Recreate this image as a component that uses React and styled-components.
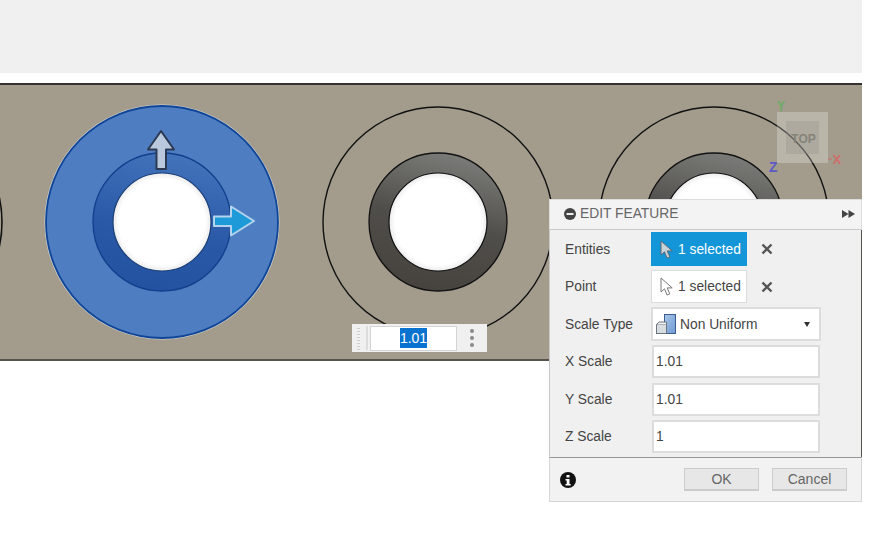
import React from "react";
import styled, { createGlobalStyle } from "styled-components";

const GlobalStyle = createGlobalStyle`
  html, body {
    margin: 0;
    background: #fff;
    font-family: "Liberation Sans", Arial, sans-serif;
    overflow: hidden;
  }
`;

const Page = styled.div`
  position: relative;
  width: 887px;
  height: 556px;
`;
const TopBand = styled.div`
  width: 862px;
  height: 73px;
  background: #f0f0f0;
  margin-bottom: 10px;
`;
const Viewport = styled.div`
  position: relative;
  box-sizing: border-box;
  width: 862px;
  height: 278px;
  background: #a39c8d;
  border-top: 2px solid #34322e;
  border-bottom: 2px solid #57544e;
  overflow: hidden;
`;
const Scene = styled.svg`
  display: block;
  width: 862px;
  height: 274px;
`;
const AxisLabel = styled.text`
  font-family: "Liberation Sans", Arial, sans-serif;
  font-size: ${p => p.$size || 13}px;
  font-weight: 700;
  fill: ${p => p.$color};
`;

const ValueBox = styled.div`
  position: absolute;
  left: 352px;
  top: 324px;
  width: 135px;
  height: 28px;
  display: flex;
  align-items: center;
  background: #f0f0f0;
`;
const Grip = styled.div`
  width: 12px;
  height: 24px;
  margin-left: 2px;
  margin-right: 2px;
  border-right: 2px solid #dcdcdc;
  background: repeating-linear-gradient(#f0f0f0 0 2px, #cfcfcf 2px 3px) 3px 0 / 3px 100% no-repeat;
`;
const ValueField = styled.div`
  box-sizing: border-box;
  width: 87px;
  height: 25px;
  background: #fff;
  border: 1px solid #d4d4d4;
  text-align: center;
  font-size: 14px;
  line-height: 23px;
  color: #fff;
`;
const Selected = styled.span`
  background: #0a72cf;
  padding: 2px 0;
`;
const Dots = styled.div`
  flex: 1;
  display: flex;
  flex-direction: column;
  align-items: center;
  gap: 3px;
`;
const Dot = styled.i`
  width: 4px;
  height: 4px;
  border-radius: 50%;
  background: #8a8a8a;
`;

const Panel = styled.section`
  position: absolute;
  left: 549px;
  top: 199px;
  width: 313px;
  font-size: 13.8px;
  color: #444;
`;
const PanelHeader = styled.header`
  box-sizing: border-box;
  height: 32px;
  display: flex;
  align-items: center;
  justify-content: space-between;
  padding: 0 6px 2px 14px;
  background: #f3f3f3;
  border: 1px solid #dcdcdc;
  border-bottom: 2px solid #c8c8c8;
  color: #666;
`;
const Title = styled.div`
  display: flex;
  align-items: center;
  gap: 4px;
  font-size: 13.8px;
`;
const PanelBody = styled.div`
  box-sizing: border-box;
  height: 227px;
  margin-top: -1px;
  padding-top: 0.5px;
  display: grid;
  grid-template-rows: repeat(6, 37.5px);
  background: #f0f0f0;
  border-left: 1px solid #c8c8c8;
  border-right: 1px solid #55534e;
`;
const Row = styled.div`
  display: flex;
  align-items: center;
  padding-left: 15px;
`;
const Label = styled.div`
  width: 86px;
  flex: none;
`;
const Picker = styled.div`
  box-sizing: border-box;
  width: 96px;
  height: ${p => (p.$active ? 34 : 33)}px;
  display: flex;
  align-items: center;
  gap: 4px;
  padding-left: ${p => (p.$active ? 9 : 8)}px;
  background: ${p => (p.$active ? "#1296d8" : "#fff")};
  border: ${p => (p.$active ? "none" : "1px solid #dcdcdc")};
  color: ${p => (p.$active ? "#fff" : "#444")};
`;
const Clear = styled.svg`
  width: 12px;
  height: 12px;
  margin-left: 14px;
`;
const Select = styled.div`
  box-sizing: border-box;
  width: 170px;
  height: 34px;
  display: flex;
  align-items: center;
  gap: 4px;
  padding: 0 9px 0 3px;
  background: #fff;
  border: 2px solid #dcdcdc;
`;
const Caret = styled.span`
  margin-left: auto;
  border-left: 3.5px solid transparent;
  border-right: 3.5px solid transparent;
  border-top: 5px solid #333;
`;
const Field = styled.div`
  box-sizing: border-box;
  width: 168px;
  height: 33px;
  margin-left: 1px;
  padding-left: 2px;
  display: flex;
  align-items: center;
  background: #fff;
  border: 2px solid #dcdcdc;
`;
const PanelFooter = styled.footer`
  box-sizing: border-box;
  height: 45px;
  display: flex;
  align-items: center;
  padding: 0 14px 0 10px;
  background: #f2f2f2;
  border: 1px solid #d6d6d6;
  border-top: 1px solid #999;
`;
const Actions = styled.div`
  margin-left: auto;
  display: flex;
  gap: 13px;
`;
const ActionButton = styled.button`
  box-sizing: border-box;
  width: 75px;
  height: 23px;
  padding: 0;
  background: #e7e7e7;
  border: 1px solid #cbcbcb;
  border-bottom-width: 2px;
  font-family: inherit;
  font-size: 14px;
  color: #666;
`;

const rings = [
  { x: 162, fill: "#4f7dc2", stroke: "#0f4596", halo: "#d8d8d8" },
  { x: 438, stroke: "#111" },
  { x: 714, stroke: "#111" }
];

function Ring({ x, fill, stroke, halo }) {
  const cy = 137;
  const id = fill ? "blueBand" : "greyBand";
  return (
    <g>
      {halo && <circle cx={x} cy={cy} r="117.5" fill={halo} />}
      <circle
        cx={x}
        cy={cy}
        r={fill ? 116 : 115}
        fill={fill || "none"}
        stroke={stroke}
        strokeWidth={fill ? 1.8 : 1.4}
      />
      <circle cx={x} cy={cy} r="69" fill={`url(#${id})`} stroke={fill ? "#123f8c" : stroke} strokeWidth="1.3" />
      <circle cx={x} cy={cy} r="49" fill="url(#hole)" stroke={fill ? "#1c3f77" : stroke} strokeWidth="1.2" />
    </g>
  );
}

function Cursor({ light }) {
  return (
    <svg width="14" height="19" viewBox="0 0 14 19">
      <path
        d="M1 1v14l3.500-3.200 2.500 6.200 2.800-1.100-2.600-6h5z"
        fill={light ? "#c9d3da" : "#fff"}
        stroke={light ? "#5f6a72" : "#7a7a7a"}
        strokeWidth="1"
        strokeLinejoin="round"
      />
    </svg>
  );
}

function ClearIcon() {
  return (
    <Clear viewBox="0 0 12 12">
      <path d="M1.500 1.500l9 9M10.500 1.500l-9 9" stroke="#555" strokeWidth="2.400" />
    </Clear>
  );
}

export default function App() {
  return (
    <Page>
      <GlobalStyle />
      <TopBand />
      <Viewport>
        <Scene viewBox="0 0 862 274">
          <defs>
            <linearGradient id="blueBand" x1="0.6" y1="0" x2="0.4" y2="1">
              <stop offset="0" stopColor="#4373ba" />
              <stop offset="0.6" stopColor="#2858a6" />
              <stop offset="1" stopColor="#2352a0" />
            </linearGradient>
            <linearGradient id="greyBand" x1="0.65" y1="0" x2="0.4" y2="1">
              <stop offset="0" stopColor="#7c7d7a" />
              <stop offset="0.5" stopColor="#504e4a" />
              <stop offset="1" stopColor="#46433e" />
            </linearGradient>
            <radialGradient id="hole">
              <stop offset="0.88" stopColor="#fff" />
              <stop offset="1" stopColor="#ececec" />
            </radialGradient>
          </defs>
          <circle cx="-115" cy="137" r="117" fill="none" stroke="#111" strokeWidth="1.6" />
          {rings.map(ring => (
            <Ring key={ring.x} {...ring} />
          ))}
          <path
            d="M161 46l13 18.500h-8v19.500h-9.500v-19.500h-8.500z"
            fill="#b9c8dd"
            stroke="#2b3a52"
            strokeWidth="2"
            strokeLinejoin="round"
          />
          <path
            d="M254 136l-23-14.500v10h-17v9.500h17v9.500z"
            fill="#1f9ad9"
            stroke="#b4d3ec"
            strokeWidth="2"
            strokeLinejoin="round"
          />
          <rect x="777" y="27" width="51" height="51" fill="#fff" fillOpacity="0.25" />
          <rect x="786" y="36" width="33" height="33" fill="#8f8d84" fillOpacity="0.3" />
          <AxisLabel x="803.500" y="58" textAnchor="middle" $color="#85837a" $size={12}>
            TOP
          </AxisLabel>
          <AxisLabel x="777" y="25" $color="#6cab66" $size={12}>Y</AxisLabel>
          <path d="M781 25v2" stroke="#6cab66" />
          <AxisLabel x="769" y="87" $color="#5b5bc4" $size={14}>Z</AxisLabel>
          <AxisLabel x="832.500" y="79" $color="#cf6d6a" $size={13}>X</AxisLabel>
          <path d="M828 74h4" stroke="#cf6d6a" />
        </Scene>
      </Viewport>

      <ValueBox>
        <Grip />
        <ValueField>
          <Selected>1.01</Selected>
        </ValueField>
        <Dots>
          <Dot />
          <Dot />
          <Dot />
        </Dots>
      </ValueBox>

      <Panel>
        <PanelHeader>
          <Title>
            <svg width="12" height="12" viewBox="0 0 12 12">
              <circle cx="6" cy="6" r="6" fill="#444" />
              <rect x="2.500" y="5" width="7" height="2" fill="#eee" />
            </svg>
            EDIT FEATURE
          </Title>
          <svg width="13" height="8" viewBox="0 0 13 8">
            <path d="M0 0l6.500 4-6.500 4zM6.500 0l6.500 4-6.500 4z" fill="#444" />
          </svg>
        </PanelHeader>
        <PanelBody>
          <Row>
            <Label>Entities</Label>
            <Picker $active>
              <Cursor light />
              1 selected
            </Picker>
            <ClearIcon />
          </Row>
          <Row>
            <Label>Point</Label>
            <Picker>
              <Cursor />
              1 selected
            </Picker>
            <ClearIcon />
          </Row>
          <Row>
            <Label>Scale Type</Label>
            <Select>
              <svg width="20" height="20" viewBox="0 0 20 20">
                <defs>
                  <linearGradient id="slab" x1="0" y1="0" x2="1" y2="1">
                    <stop offset="0" stopColor="#a8c6ea" />
                    <stop offset="1" stopColor="#6f9ad2" />
                  </linearGradient>
                </defs>
                <rect x="8.500" y="0.500" width="11" height="19" fill="url(#slab)" stroke="#3d5f8f" />
                <rect x="0.500" y="10.500" width="10" height="9" fill="#d8dde2" stroke="#6d7680" />
                <path d="M0.500 10.500l2.500-2.500h7.500v2.500" fill="#f0f0f0" stroke="#6d7680" />
              </svg>
              Non Uniform
              <Caret />
            </Select>
          </Row>
          <Row>
            <Label>X Scale</Label>
            <Field>1.01</Field>
          </Row>
          <Row>
            <Label>Y Scale</Label>
            <Field>1.01</Field>
          </Row>
          <Row>
            <Label>Z Scale</Label>
            <Field>1</Field>
          </Row>
        </PanelBody>
        <PanelFooter>
          <svg width="16" height="16" viewBox="0 0 16 16">
            <circle cx="8" cy="8" r="8" fill="#111" />
            <rect x="6.500" y="3" width="3" height="2.500" fill="#fff" />
            <path d="M5.500 7h4v5h1.200v1.500H5.500V12h1.200V8.500H5.500z" fill="#fff" />
          </svg>
          <Actions>
            <ActionButton>OK</ActionButton>
            <ActionButton>Cancel</ActionButton>
          </Actions>
        </PanelFooter>
      </Panel>
    </Page>
  );
}
